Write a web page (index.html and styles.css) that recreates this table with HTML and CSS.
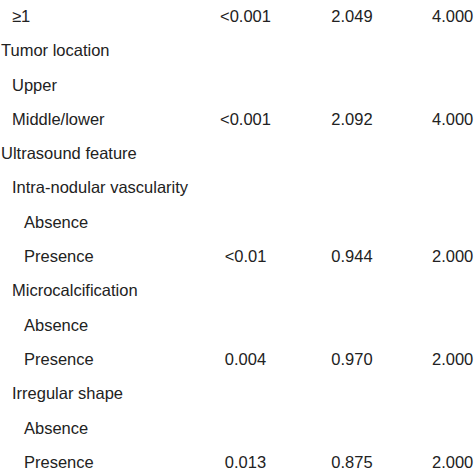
FILE: index.html
```html
<!DOCTYPE html>
<html>
<head>
<meta charset="utf-8">
<link rel="stylesheet" href="styles.css">
</head>
<body>
<div class="table">
  <div class="row"><span class="label l1">≥1</span><span class="c2">&lt;0.001</span><span class="c3">2.049</span><span class="c4">4.000</span></div>
  <div class="row"><span class="label l0">Tumor location</span><span class="c2"></span><span class="c3"></span><span class="c4"></span></div>
  <div class="row"><span class="label l1">Upper</span><span class="c2"></span><span class="c3"></span><span class="c4"></span></div>
  <div class="row"><span class="label l1">Middle/lower</span><span class="c2">&lt;0.001</span><span class="c3">2.092</span><span class="c4">4.000</span></div>
  <div class="row"><span class="label l0">Ultrasound feature</span><span class="c2"></span><span class="c3"></span><span class="c4"></span></div>
  <div class="row"><span class="label l1">Intra-nodular vascularity</span><span class="c2"></span><span class="c3"></span><span class="c4"></span></div>
  <div class="row"><span class="label l2">Absence</span><span class="c2"></span><span class="c3"></span><span class="c4"></span></div>
  <div class="row"><span class="label l2">Presence</span><span class="c2">&lt;0.01</span><span class="c3">0.944</span><span class="c4">2.000</span></div>
  <div class="row"><span class="label l1">Microcalcification</span><span class="c2"></span><span class="c3"></span><span class="c4"></span></div>
  <div class="row"><span class="label l2">Absence</span><span class="c2"></span><span class="c3"></span><span class="c4"></span></div>
  <div class="row"><span class="label l2">Presence</span><span class="c2">0.004</span><span class="c3">0.970</span><span class="c4">2.000</span></div>
  <div class="row"><span class="label l1">Irregular shape</span><span class="c2"></span><span class="c3"></span><span class="c4"></span></div>
  <div class="row"><span class="label l2">Absence</span><span class="c2"></span><span class="c3"></span><span class="c4"></span></div>
  <div class="row"><span class="label l2">Presence</span><span class="c2">0.013</span><span class="c3">0.875</span><span class="c4">2.000</span></div>
</div>
</body>
</html>
```
FILE: styles.css
```css
html, body {
  margin: 0;
  padding: 0;
  background: #ffffff;
  overflow: hidden;
  width: 474px;
  height: 474px;
}
.table {
  margin-top: -1px;
  font-family: "Liberation Sans", Arial, Helvetica, sans-serif;
  font-size: 16.5px;
  color: #222222;
}
.row {
  display: grid;
  grid-template-columns: 190px 111px 102px 80px;
  height: 34.3px;
  line-height: 34.3px;
  white-space: nowrap;
}
.label { text-align: left; }
.l0 { padding-left: 1px; }
.l1 { padding-left: 12px; }
.l2 { padding-left: 24px; }
.c2, .c3 { text-align: center; }
.c4 { padding-left: 29px; }
```
